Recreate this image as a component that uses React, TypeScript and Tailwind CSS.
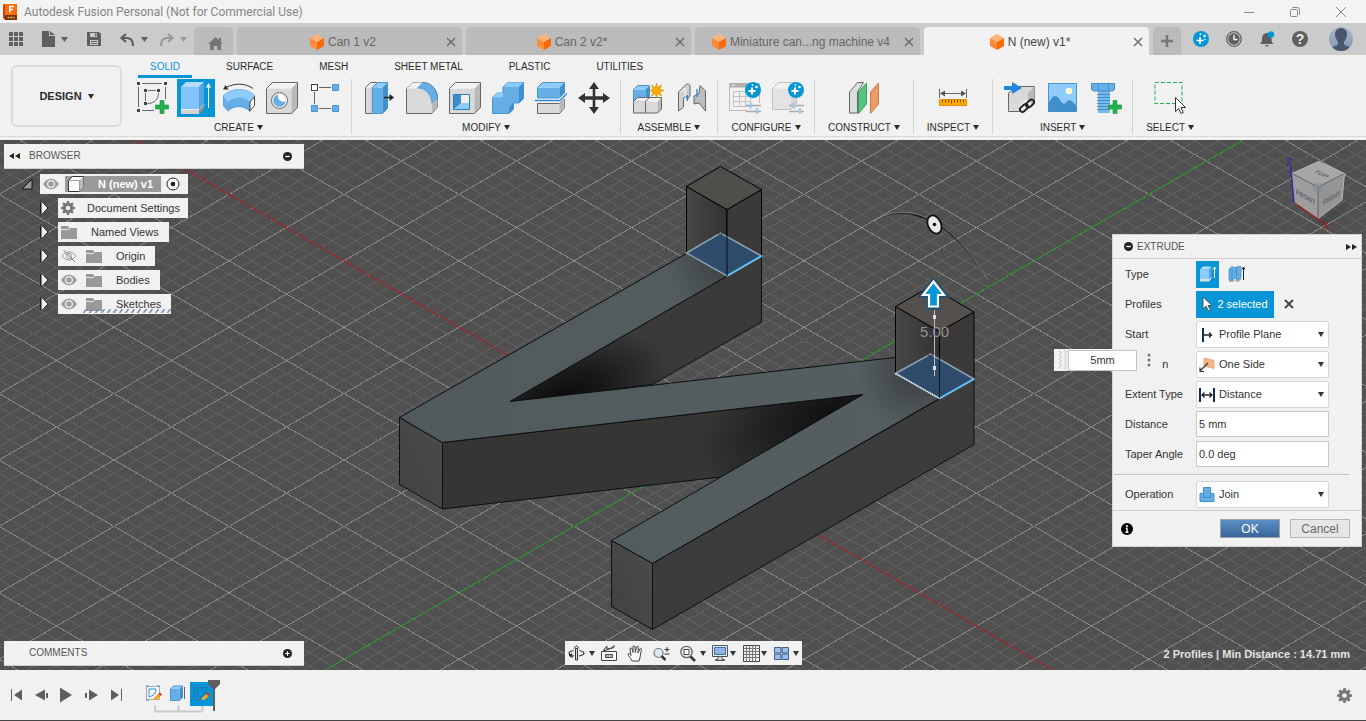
import type { ReactNode } from "react";
import clsx from "clsx";

const OUT = "#666";
const BLUE = "#66aee6";
const BLUE_LIGHT = "#8ecbff";
const BLUE_DARK = "#3f8fcb";

function Caret({ className = "" }: { className?: string }) {
  return (
    <svg width="6" height="5" viewBox="0 0 7 5" preserveAspectRatio="none" className={clsx("shrink-0", className)}>
      <path d="M0 0h7L3.5 5z" fill="currentColor" />
    </svg>
  );
}

function Icon32({ children }: { children: ReactNode }) {
  return (
    <svg width="32" height="32" viewBox="0 0 32 32" fill="none" className="shrink-0">
      {children}
    </svg>
  );
}

function PlusBadge() {
  return <path d="M23 18.5h4v4.5h4.5v4h-4.5v4.5h-4v-4.5h-4.5v-4h4.5z" fill="#22b14c" stroke="#159040" strokeWidth=".6" />;
}

// solid box drawn as front, top and right faces
function Box({ x, y, w, h, d, front, top, side, stroke }: {
  x: number; y: number; w: number; h: number; d: number;
  front: string; top: string; side: string; stroke?: string;
}) {
  return (
    <g>
      <path d={`M${x} ${y + d}h${w}v${h}h${-w}z`} fill={front} />
      <path d={`M${x} ${y + d}l${d} ${-d}h${w}l${-d} ${d}z`} fill={top} />
      <path d={`M${x + w} ${y + d}l${d} ${-d}v${h}l${-d} ${d}z`} fill={side} />
      {stroke && <path d={`M${x} ${y + d}l${d} ${-d}h${w}v${h}l${-d} ${d}h${-w}z`} stroke={stroke} fill="none" />}
    </g>
  );
}

const gray = { front: "#d9d9d9", top: "#f2f2f2", side: "#b9b9b9", stroke: OUT };
const blue = { front: BLUE, top: BLUE_LIGHT, side: BLUE_DARK, stroke: "#4a93cb" };

function ConfigBadge() {
  return (
    <g>
      <path d="M17 23.5h15M17 29.5h15" stroke="#ababab" strokeWidth="1.5" />
      <path d="M22 20.500v6M28 26v6" stroke="#9ecbee" strokeWidth="2.5" />
      <circle cx="24" cy="8" r="8" fill="#0696d7" />
      <path d="M23 5.500v7M19.500 9h7" stroke="#fff" strokeWidth="2" />
      <circle cx="27.500" cy="5" r="1.3" fill="#fff" />
      <circle cx="23.500" cy="2.800" r=".9" fill="#fff" />
    </g>
  );
}

const icons: Record<string, ReactNode> = {
  sketch: (
    <>
      <path d="M5 1.500h20M1.500 5v20M28.500 5v12M5 28.500h12" stroke={OUT} />
      <path d="M0 0h3v3H0zM27 0h3v3h-3zM0 27h3v3H0zM7 7h3v3H7zM20 7h3v3h-3zM7 20h3v3H7z" fill="#444" />
      <path d="M11 8.500h8M8.500 11v8M21.500 11c0 6-4 10.500-11 10.500" stroke={OUT} />
      <PlusBadge />
    </>
  ),
  extrude: (
    <>
      <path d="M1 27h18l5-5v4.500L19 32H1z" fill="#d4d4d4" />
      <path d="M19 27l5-5v4.500L19 32z" fill="#8b8b8b" />
      <path d="M1 27.500h18l5-5" stroke="#eee" />
      <path d="M1 5h18v22H1z" fill="#82c4fb" />
      <path d="M1 5l5-5h18l-5 5z" fill="#b5defd" />
      <path d="M19 5l5-5v22l-5 5z" fill="#57a5e0" />
      <path d="M28.500 26V4" stroke="#fff" />
      <path d="M26 5.500L28.500 1 31 5.500z" fill="#fff" />
    </>
  ),
  revolve: (
    <>
      <path d="M30 6.500C22 1 12 .8 3 5.500" stroke="#333" />
      <path d="M0 7.500L2.500 3l3 4.500z" fill="#333" />
      <path d="M0 14C8 6 23 5 32 14l-5 5.500v10C21 23 11 23 5 29l-5-6z" fill={BLUE} stroke="#3f8fcb" strokeWidth=".8" />
      <path d="M0 14C8 6 23 5 32 14l-5 6C21 14 11 14 5 20z" fill={BLUE_LIGHT} />
      <path d="M27 20l4.500-5.500v9L27 29z" fill="#fff" stroke="#444" />
    </>
  ),
  hole: (
    <>
      <Box x={0.5} y={0.5} w={25} h={25} d={6} {...gray} />
      <circle cx="13.500" cy="18.500" r="8" fill="#f4f4f4" stroke={OUT} />
      <circle cx="13.500" cy="18.500" r="6.300" fill={BLUE} />
      <path d="M12 12.400a6.300 6.300 0 0 1 7.700 7.400c-5.500.5-8.500-3-7.700-7.400z" fill="#fff" />
    </>
  ),
  pattern: (
    <>
      <path d="M10 5.500h12M5.500 10v12M10 26.500h12" stroke={OUT} />
      <rect x="2.500" y="2.500" width="6" height="6" fill="#fff" stroke="#444" />
      <path d="M23.500 2.500h6v6h-6zM2.500 23.500h6v6h-6zM23.500 23.500h6v6h-6z" fill={BLUE} stroke="#4a93cb" />
    </>
  ),
  presspull: (
    <>
      <Box x={2.5} y={0.5} w={6} h={26} d={5} {...gray} />
      <Box x={9.5} y={0.5} w={10} h={26} d={5} {...blue} />
      <path d="M21 15.500h7" stroke="#222" strokeWidth="1.5" />
      <path d="M26.500 12l4.500 3.500-4.500 3.500z" fill="#222" />
    </>
  ),
  fillet: (
    <>
      <path d="M.5 7L7 .5h10c8 0 14 7 14.500 14V25L26 31.500H.5z" fill="#d9d9d9" stroke={OUT} />
      <path d="M.5 7L7 .5h10L11.500 6z" fill="#f2f2f2" />
      <path d="M11.500 6L17 .5c8 0 14 7 14.500 16L26 21.500C25.500 12 19 6 11.500 6z" fill={BLUE} stroke="#4a93cb" strokeWidth=".7" />
      <path d="M26 22l5.500-5.500V25L26 31z" fill="#b9b9b9" />
    </>
  ),
  shell: (
    <>
      <Box x={0.5} y={0.5} w={25} h={25} d={6} {...gray} />
      <path d="M4.500 12.500h16v15h-16z" fill={BLUE_LIGHT} stroke="#2c7fbe" />
      <path d="M5 13h7v8l-7 6z" fill={BLUE_DARK} />
      <path d="M12 13h8v8h-8z" fill="#f1f1f1" />
    </>
  ),
  combine: (
    <>
      <path d="M.5 15.500L5 11h6V5L15.500.5h16v16L27 21h-5.500v6L17 31.500H.5z" fill={BLUE} stroke="#4a93cb" />
      <path d="M11 5L15.500.5h16L27 5zM.5 15.500L5 11h6v4.500z" fill={BLUE_LIGHT} />
      <path d="M27 5l4.500-4.500v16L27 21zM17 25l4.500-4v6L17 31.500z" fill={BLUE_DARK} />
    </>
  ),
  split: (
    <>
      <Box x={2.5} y={0.5} w={22} h={10.5} d={5} {...blue} />
      <path d="M2.500 21.500h22L29.500 17v9l-5 5.500h-22z" fill="#d9d9d9" stroke={OUT} />
      <path d="M24.500 21.500L29.500 17v9l-5 5z" fill="#b9b9b9" />
      <path d="M0 18.500h25l7-7" stroke="#fff" strokeWidth="3" />
      <path d="M0 18.500h25l7-7" stroke="#1e88e0" strokeWidth="1.3" />
    </>
  ),
  move: (
    <path d="M16 0l5 7h-3.700v7.200H25V11l7 5-7 5v-3.300h-7.700V25H21l-5 7-5-7h3.700v-7.300H7V21l-7-5 7-5v3.200h7.700V7H11z" fill="#333" />
  ),
  component: (
    <>
      <Box x={1.5} y={3.5} w={12} h={12} d={4} {...blue} />
      <Box x={1.5} y={15.5} w={12} h={11.5} d={4} {...gray} />
      <Box x={13.5} y={15.5} w={12} h={11.5} d={4} {...gray} />
      <path d="M24.500 1l1.200 4.700L29.500 3l-1.800 4.200L32 8.500l-4.300 1.300 1.800 4.200-3.800-2.500-1.200 4.500-1.200-4.500-3.800 2.500 1.800-4.200L17 8.500l4.300-1.300L19.500 3l3.800 2.700z" fill="#ffa800" stroke="#d98a00" strokeWidth=".6" />
    </>
  ),
  joint: (
    <>
      <path d="M3.500 10L10 3.500c1-2 5-2 5 .5v10L12 17.500V14L8.500 16v9l-5 4z" fill="#d0d0d0" stroke={OUT} />
      <path d="M5.500 10.500L10 6v9" stroke="#f7f7f7" />
      <path d="M30.500 9L25 3.500l-1 8L19 14v8l5-1 6.500 8z" fill="#bcbcbc" stroke={OUT} />
      <path d="M22 7v8M12.500 13v6" stroke="#1e88e0" strokeWidth="1.3" />
    </>
  ),
  configTable: (
    <>
      <path d="M1 1h29v4.500H1z" fill="#b0b0b0" />
      <path d="M.5 1v27.500H18M30.500 1v20" stroke="#bcbcbc" />
      <path d="M4.500 9.500h17v15h-17zM4.500 14.500h18M4.500 19.500h17M10.500 9.500v15M16.500 9.500v15" stroke="#c2c2c2" />
      <path d="M3 3h3" stroke="#fff" />
      <ConfigBadge />
    </>
  ),
  configBody: (
    <>
      <g opacity=".55">
        <Box x={0.5} y={0.5} w={18} h={21} d={6} front="#d9d9d9" top="#f2f2f2" side="#c5c5c5" stroke="#999" />
      </g>
      <ConfigBadge />
    </>
  ),
  plane: (
    <>
      <path d="M1.500 10l8-9.500h6l-6 9.500v21h-8z" fill="#dedede" stroke={OUT} />
      <path d="M10.500 10l8-9v21l-8 9.500z" fill="#57c47e" stroke="#3da162" />
      <path d="M22.500 10l8-9v21l-8 9.500z" fill="#e99a66" stroke="#cf7d45" />
    </>
  ),
  measure: (
    <>
      <path d="M2.500 7v9M29.500 7v9M5 11.500h22" stroke={OUT} />
      <path d="M3 11.500l5-3v6zM29 11.500l-5-3v6z" fill="#555" />
      <path d="M2.500 17.500h27v6h-27z" fill="#ffa800" stroke="#e28f00" />
      <path d="M5.500 18v2.500M8.500 18v2.500M11.500 18v2.500M14.500 18v3.500M17.500 18v2.500M20.500 18v2.500M23.500 18v2.500M26.500 18v2.500" stroke="#7a5200" />
    </>
  ),
  insert: (
    <>
      <path d="M4.500 11L13 4.500h17.500v16L24 29.500H4.500z" fill="#d9d9d9" stroke={OUT} />
      <path d="M24 11l6.500-6.500V22L24 29z" fill="#b9b9b9" />
      <path d="M0 4h8V0l10 6-10 6V8H0z" fill="#1e88e0" />
      <g stroke="#f4f4f4" strokeWidth="5">
        <rect x="17" y="22.500" width="9" height="5.500" rx="2.700" transform="rotate(-45 21 25)" />
      </g>
      <g stroke="#222" strokeWidth="1.9">
        <rect x="15.500" y="23.500" width="9" height="5" rx="2.500" transform="rotate(-42 20 26)" />
        <rect x="21.500" y="19" width="9" height="5" rx="2.500" transform="rotate(-42 26 21.500)" />
      </g>
    </>
  ),
  canvas: (
    <>
      <rect x="1.500" y="1.500" width="28" height="28" fill={BLUE_LIGHT} stroke="#4a93cb" />
      <path d="M1.500 21c5-9 8-9 12-2 2 3 4 4 6 1 3-4 6-1 10 4v5.500h-28z" fill={BLUE_DARK} />
      <circle cx="22" cy="9" r="3.300" fill="#fffcc8" />
    </>
  ),
  bolt: (
    <>
      <path d="M8 8h12v23H8z" fill="#7bb8e6" />
      <path d="M7 12.500h13M7 15.500h13M7 18.500h13M7 21.500h13M7 24.500h13M7 27.500h13" stroke="#3f8fcb" />
      <path d="M1.500 1.500h23v6l-2 1.500h-19l-2-1.500z" fill={BLUE} stroke="#3f8fcb" />
      <path d="M8 2v6M18.500 2v6" stroke="#3f8fcb" />
      <PlusBadge />
    </>
  ),
  select: (
    <>
      <rect x="1" y=".5" width="27" height="21" stroke="#22b14c" strokeDasharray="4 2" />
      <path d="M21.500 15.500v14l3.200-3 2.300 5 2.300-1-2.300-5h4.500z" fill="#fff" stroke="#333" />
    </>
  ),
};

const groups = [
  { label: "CREATE", icons: ["sketch", "extrude", "revolve", "hole", "pattern"] },
  { label: "MODIFY", icons: ["presspull", "fillet", "shell", "combine", "split", "move"] },
  { label: "ASSEMBLE", icons: ["component", "joint"] },
  { label: "CONFIGURE", icons: ["configTable", "configBody"] },
  { label: "CONSTRUCT", icons: ["plane"] },
  { label: "INSPECT", icons: ["measure"] },
  { label: "INSERT", icons: ["insert", "canvas", "bolt"] },
  { label: "SELECT", icons: ["select"] },
];

const ribbonTabs = ["SOLID", "SURFACE", "MESH", "SHEET METAL", "PLASTIC", "UTILITIES"];

const documents = [
  { name: "Can 1 v2", active: false },
  { name: "Can 2 v2*", active: false },
  { name: "Miniature can...ng machine v4", active: false },
  { name: "N (new) v1*", active: true },
];

function TitleBar() {
  return (
    <header className="h-[23px] bg-[#f3f3f3] flex items-center pl-[3px] text-[#858585]">
      <svg width="14" height="16" viewBox="0 0 14 16" className="shrink-0">
        <path d="M1 0h12l1 2v14H2L0 14V1z" fill="#c24a00" />
        <path d="M2 0h12v11H2z" fill="#ff6b0f" />
        <path d="M2 11h12v5H2z" fill="#7c3000" />
        <path d="M6.900 8.500v-6h4M7 5.500h3" stroke="#fff" strokeWidth="1.6" fill="none" />
        <path d="M4.500 13.500h7" stroke="#d9a98a" strokeWidth="1.5" strokeDasharray="2 .6" />
      </svg>
      <span className="ml-[7px] font-[Roboto,sans-serif] text-xs leading-4">
        Autodesk Fusion Personal (Not for Commercial Use)
      </span>
      <div className="ml-auto flex gap-[34px] pr-[19px]">
        <button aria-label="Minimize">
          <svg width="12" height="12" viewBox="0 0 12 12"><path d="M1 6.500h10" stroke="#888" /></svg>
        </button>
        <button aria-label="Restore">
          <svg width="12" height="12" viewBox="0 0 12 12" fill="none" stroke="#888">
            <rect x="1.500" y="3.500" width="7" height="7" rx="1" />
            <path d="M3.500 1.500h5a2 2 0 0 1 2 2v5" />
          </svg>
        </button>
        <button aria-label="Close">
          <svg width="12" height="12" viewBox="0 0 12 12"><path d="M1 1l10 10M11 1L1 11" stroke="#888" /></svg>
        </button>
      </div>
    </header>
  );
}

function DocCube() {
  return (
    <svg width="14" height="16" viewBox="0 0 14 16" className="shrink-0">
      <path d="M7 0l7 4-7 4-7-4z" fill="#ffb37a" />
      <path d="M0 4l7 4v8l-7-4z" fill="#ff8a3c" />
      <path d="M14 4L7 8v8l7-4z" fill="#f96a0b" />
    </svg>
  );
}

function TabBar() {
  return (
    <div className="h-8 bg-[#cbcbcb] flex items-end text-[#5f5f5f]">
      <div className="flex items-center w-[194px] h-8 pl-[9px] pb-1 shrink-0">
        <button aria-label="Data panel" className="mt-1">
          <svg width="14" height="14" viewBox="0 0 14 14" fill="currentColor">
            <path d="M0 0h4v4H0zM5 0h4v4H5zM10 0h4v4h-4zM0 5h4v4H0zM5 5h4v4H5zM10 5h4v4h-4zM0 10h4v4H0zM5 10h4v4H5zM10 10h4v4h-4z" />
          </svg>
        </button>
        <button aria-label="File" className="flex items-center gap-1.5 ml-[19px] mt-1">
          <svg width="13" height="16" viewBox="0 0 13 16" fill="currentColor"><path d="M0 0h7v5h6v11H0zM8 0l5 4H8z" /></svg>
          <Caret className="w-[7px]" />
        </button>
        <button aria-label="Save" className="ml-[19px] mt-1">
          <svg width="14" height="14" viewBox="0 0 14 14">
            <path d="M0 0h12l2 2v12H0z" fill="currentColor" />
            <path d="M3 1h7v4H3zM3 8h8v5H3z" fill="#cbcbcb" />
            <path d="M8 1.500h1.500v2.500H8zM4 9h6v1H4zM4 11h6v1H4z" fill="#5f5f5f" />
          </svg>
        </button>
        <button aria-label="Undo" className="flex items-center gap-[7px] ml-[19px] mt-1">
          <svg width="14" height="13" viewBox="0 0 14 13"><path d="M6 1L1.500 5 6 9M2 5h5c4 0 6 3 6 8" fill="none" stroke="currentColor" strokeWidth="2.2" /></svg>
          <Caret className="w-[7px]" />
        </button>
        <button aria-label="Redo" className="flex items-center gap-1.5 ml-3 mt-1 text-[#9a9a9a]">
          <svg width="14" height="13" viewBox="0 0 14 13"><path d="M8 1l4.500 4L8 9M12 5H7c-4 0-6 3-6 8" fill="none" stroke="currentColor" strokeWidth="2.2" /></svg>
          <Caret className="w-[7px]" />
        </button>
      </div>
      <nav className="flex-1 flex gap-1 min-w-0">
        <a href="#home" aria-label="Home" className="w-[39px] h-7 bg-[#bbb] rounded-t flex items-center justify-center pt-1 pl-1 shrink-0 text-[#757575]">
          <svg width="15" height="13" viewBox="0 0 15 13" fill="currentColor"><path d="M7.500 0L11 3V.8h2V5l2 2h-2v6H9.300V9H5.700v4H2V7H0z" /></svg>
        </a>
        {documents.map((doc) => (
          <div
            key={doc.name}
            className={clsx(
              "flex-1 min-w-0 h-7 rounded-t flex items-center pl-1 pr-[5px] pt-px",
              doc.active ? "bg-[#f2f2f2] text-[#444]" : "bg-[#bbb] text-[#666]"
            )}
          >
            <a href="#doc" className="flex-1 min-w-0 flex items-center justify-center gap-1 text-xs leading-4 whitespace-nowrap">
              <DocCube />
              {doc.name}
            </a>
            <button aria-label={`Close ${doc.name}`}>
              <svg width="12" height="12" viewBox="0 0 12 12"><path d="M2 2l8 8M10 2l-8 8" stroke="#6a6a6a" strokeWidth="1.4" /></svg>
            </button>
          </div>
        ))}
        <button aria-label="New document" className="w-7 h-7 bg-[#bbb] rounded-t flex items-center justify-center shrink-0">
          <svg width="14" height="14" viewBox="0 0 14 14"><path d="M7 1v12M1 7h12" stroke="#777" strokeWidth="2.5" /></svg>
        </button>
      </nav>
      <div className="h-8 flex items-center gap-[17px] pl-3 pr-[13px] shrink-0">
        <button aria-label="Extensions">
          <svg width="16" height="16" viewBox="0 0 16 16">
            <circle cx="8" cy="8" r="8" fill="#0696d7" />
            <path d="M7 6v7M3.500 9.500h7" stroke="#fff" strokeWidth="1.7" />
            <circle cx="11.500" cy="5" r="1.300" fill="#fff" />
            <circle cx="7.500" cy="3.200" r="1" fill="#fff" />
            <circle cx="12" cy="8.500" r=".8" fill="#fff" />
          </svg>
        </button>
        <button aria-label="Job status">
          <svg width="16" height="16" viewBox="0 0 16 16" fill="none">
            <circle cx="8" cy="8" r="7.300" stroke="#5f5f5f" strokeWidth="1.3" />
            <circle cx="8" cy="8" r="5.700" fill="#5f5f5f" />
            <path d="M8 4v4.500h3.500" stroke="#fff" strokeWidth="1.3" />
          </svg>
        </button>
        <button aria-label="Notifications">
          <svg width="16" height="16" viewBox="0 0 16 16">
            <path d="M1 13c2-2 2-3 2-6 0-2.500 1.500-4.500 4.500-5C11 1.700 12.500 4 12.500 7c0 3 0 4 2 6zM6 14h4l-2 2z" fill="#5f5f5f" />
            <circle cx="12" cy="3.500" r="3.200" fill="#0696d7" />
          </svg>
        </button>
        <button aria-label="Help" className="w-4 h-4 rounded-full bg-[#5f5f5f] text-[#eee] text-sm leading-4 font-bold">?</button>
        <button aria-label="Account" className="ml-1">
          <svg width="24" height="24" viewBox="0 0 24 24">
            <defs>
              <linearGradient id="avatar" x1="0" y1="0" x2="0" y2="1">
                <stop offset="0" stopColor="#a9b8cc" />
                <stop offset="1" stopColor="#7f93b3" />
              </linearGradient>
              <clipPath id="avatarClip"><circle cx="12" cy="12" r="12" /></clipPath>
            </defs>
            <g clipPath="url(#avatarClip)">
              <path d="M0 0h24v24H0z" fill="url(#avatar)" />
              <path d="M12 1c4 0 6 3 6 6.500S16 13 15 15v2.500c2 1.500 5 1.500 6 4V24H3v-2.500c1-2.500 4-2.500 6-4V15C8 13 6 11 6 7.500S8 1 12 1z" fill="#47566c" />
            </g>
          </svg>
        </button>
      </div>
    </div>
  );
}

function Ribbon() {
  return (
    <section className="bg-[#f1f1f1] h-[85px] pb-[3px] flex text-[#2b2b2b] text-[10px] leading-3">
      <div className="flex flex-1 border-b border-[#d9d9d9]">
        <button className="ml-[11px] mt-2.5 w-[111px] h-[62px] shrink-0 border-2 border-[#dcdcdc] rounded-md text-[11px] font-bold flex items-center justify-center gap-1.5">
          DESIGN <Caret />
        </button>
        <div className="ml-[9px] flex-1">
          <nav className="flex gap-[22px] pl-[7px] h-6">
            {ribbonTabs.map((tab) => (
              <a
                key={tab}
                href="#tab"
                className={clsx(
                  "h-[23px] px-3 pt-1.5 border-b-[3px] whitespace-nowrap",
                  tab === "SOLID" ? "text-[#0696d7] border-[#0696d7]" : "border-transparent"
                )}
              >
                {tab}
              </a>
            ))}
          </nav>
          <div className="flex">
            {groups.map((group, i) => (
              <div
                key={group.label}
                className={clsx(
                  "flex flex-col items-center h-[55px]",
                  i === 0 ? "pr-[5px]" : "px-[5px]",
                  i < groups.length - 1 && "border-r border-[#d2d2d2]"
                )}
              >
                <div className="flex">
                  {group.icons.map((name) => (
                    <button key={name} aria-label={name} className="w-[43px] h-[38px] flex justify-center">
                      <span className={clsx("w-[38px] h-[38px] flex items-center justify-center", name === "extrude" && "bg-[#0696d7]")}>
                        <Icon32>{icons[name]}</Icon32>
                      </span>
                    </button>
                  ))}
                </div>
                <button className="flex items-center gap-[3px] px-2 mt-[5px] whitespace-nowrap">
                  {group.label} <Caret className="-mt-px" />
                </button>
              </div>
            ))}
          </div>
        </div>
      </div>
    </section>
  );
}

// isometric ground grid, both line families through the origin
const ORIGIN = { x: 689, y: 320 };
const SLOPE = 0.5774;

function gridPath(step: number, skip: number) {
  let d = "";
  const count = Math.ceil(1400 / step);
  for (let n = -count; n <= count; n++) {
    if (skip && n % skip === 0) continue;
    const y = ORIGIN.y + n * step;
    const rise = 1200 * SLOPE;
    d += `M${ORIGIN.x - 1200} ${(y - rise).toFixed(1)}L${ORIGIN.x + 1200} ${(y + rise).toFixed(1)}`;
    d += `M${ORIGIN.x - 1200} ${(y + rise).toFixed(1)}L${ORIGIN.x + 1200} ${(y - rise).toFixed(1)}`;
  }
  return d;
}

const MINOR = gridPath(13.28, 5);
const MAJOR = gridPath(66.4, 0);

function Scene() {
  return (
    <svg className="absolute inset-0 w-full h-full" viewBox="0 0 1366 530" preserveAspectRatio="xMidYMid slice" fill="none">
      <defs>
        <linearGradient id="top" x1="400" y1="300" x2="980" y2="240" gradientUnits="userSpaceOnUse">
          <stop offset="0" stopColor="#50595b" />
          <stop offset="1" stopColor="#566062" />
        </linearGradient>
        <radialGradient id="notchA" cx="565" cy="255" r="110" gradientUnits="userSpaceOnUse" gradientTransform="translate(565 255) rotate(-20) scale(1 .5) translate(-565 -255)">
          <stop offset="0" stopColor="#0c0c0c" />
          <stop offset=".35" stopColor="#181818" />
          <stop offset="1" stopColor="#3b3a39" />
        </radialGradient>
        <radialGradient id="notchB" cx="830" cy="272" r="140" gradientUnits="userSpaceOnUse" gradientTransform="translate(830 272) rotate(-22) scale(1 .5) translate(-830 -272)">
          <stop offset="0" stopColor="#101010" />
          <stop offset=".35" stopColor="#1c1c1c" />
          <stop offset="1" stopColor="#353533" />
        </radialGradient>
        <linearGradient id="pillar" x1="0" y1="0" x2="1" y2="0">
          <stop offset="0" stopColor="#484847" />
          <stop offset="1" stopColor="#333232" />
        </linearGradient>
        <linearGradient id="end" x1="0" y1="1" x2="1" y2="0">
          <stop offset="0" stopColor="#414141" />
          <stop offset="1" stopColor="#4b4b4b" />
        </linearGradient>
        <radialGradient id="shade" cx="725" cy="120" r="60" gradientUnits="userSpaceOnUse">
          <stop offset="0" stopColor="#222" stopOpacity=".5" />
          <stop offset="1" stopColor="#222" stopOpacity="0" />
        </radialGradient>
        <radialGradient id="shade2" cx="915" cy="235" r="60" gradientUnits="userSpaceOnUse">
          <stop offset="0" stopColor="#222" stopOpacity=".5" />
          <stop offset="1" stopColor="#222" stopOpacity="0" />
        </radialGradient>
        <linearGradient id="arc" x1="875" y1="0" x2="988" y2="0" gradientUnits="userSpaceOnUse">
          <stop offset="0" stopColor="#111" stopOpacity="0" />
          <stop offset=".4" stopColor="#111" />
          <stop offset=".7" stopColor="#222" />
          <stop offset="1" stopColor="#222" stopOpacity="0" />
        </linearGradient>
      </defs>
      <rect x="-600" width="2600" height="530" fill="#505050" />
      <g shapeRendering="crispEdges">
        <path d={MINOR} stroke="#606060" />
        <path d={MAJOR} stroke="#858585" />
        <path d="M-511 -373L1889 1013" stroke="#a82222" />
        <path d="M-511 1013L1889 -373" stroke="#2a982a" />
      </g>

      <g stroke="#0b0f11" strokeLinejoin="round">
        {/* back arm, inner wall and post side */}
        <path d="M510 261.500L727 136l34.500-20v66L652 244.500z" fill="url(#notchA)" />
        {/* front wall of the diagonal */}
        <path d="M442.500 302.500L863 254.500 721 337 442.500 369z" fill="url(#notchB)" />
        <path d="M399.500 277.500l43 25V369l-43-24.500z" fill="url(#end)" />
        <path
          d="M686.500 113.500L399.500 277.500l43 25L863 254.500 611.500 400.500l41 23L939.500 258.500 974 239 930 214 895 217.500 510 261.500 727 136z"
          fill="url(#top)"
        />
        <path d="M652.500 423.500L974 239v65.500L652.500 489.500z" fill="#3c3c3c" />
        <path d="M611.500 400.500l41 23v66l-41-23z" fill="url(#end)" />
      </g>
      <path d="M686.500 113.500L600 163l30 28 97-55z" fill="url(#shade)" />
      <path d="M895 217.500L840 224l20 80 79.500-46L974 239l-44-25z" fill="url(#shade2)" />

      <g stroke="#000">
        <path d="M686.500 46.500l40.500 23V136l-40.500-23z" fill="url(#pillar)" />
        <path d="M727 69.500l34.500-20V116L727 136z" fill="#3b3a39" />
        <path d="M686.500 46.500l34-20 41 23-34.500 20z" fill="#504e4a" />
        <path d="M895.500 166.500l44 25v67l-44-25z" fill="url(#pillar)" />
        <path d="M939.500 191.500L974 172v67l-34.500 19.500z" fill="#3b3a39" />
        <path d="M895.500 166.500l35-20L974 172l-34.500 19.500z" fill="#53504d" />
      </g>
      <g strokeWidth="1.5">
        <path d="M686.500 113l34-20 41 23L727 136z" fill="#2f4d70" fillOpacity=".92" stroke="#8fa3b5" />
        <path d="M727 136l34.500-20" stroke="#5cc0f8" strokeWidth="2" />
        <path d="M895.500 233.500l35-19.500L974 239l-34.500 19.500z" fill="#2f4d70" fillOpacity=".92" stroke="#8fa3b5" />
        <path d="M939.500 258.500L974 239" stroke="#5cc0f8" strokeWidth="2" />
        <path d="M895.500 233.500l44 25" stroke="#fff" strokeDasharray="1 1" />
      </g>
      <path d="M727 93v43M939.500 214v44" stroke="#071320" />
      <circle cx="720.500" cy="91.500" r="3" stroke="#3c3c3c" />
      <circle cx="930" cy="213" r="3" stroke="#3c3c3c" />

      {/* taper handle */}
      <path d="M875 82c14-11 34-11 52-3 22 9 43 32 61 62" stroke="#9b9b9b" transform="translate(0 -1)" opacity=".6" />
      <path d="M875 82c14-11 34-11 52-3 22 9 43 32 61 62" stroke="url(#arc)" strokeWidth="1.3" />
      <ellipse cx="934.500" cy="84.500" rx="6.500" ry="9.500" transform="rotate(-25 934.500 84.500)" fill="#e8e8e8" stroke="#111" strokeWidth="1.8" />
      <circle cx="934.500" cy="84.500" r="1.800" fill="#111" />

      {/* distance manipulator */}
      <path d="M934.500 170v66" stroke="#b9bcc0" />
      <path d="M933 175h3v4h-3zM933 226h3v4h-3z" fill="#d6dde4" />
      <text x="934.500" y="197" textAnchor="middle" fontSize="15" fill="#929292">5.00</text>
      <path d="M933.500 140.500l12 15h-7v12h-10v-12h-7z" fill="#0696d7" stroke="#1c4f73" strokeWidth="4" />
      <path d="M933.500 141.500l10.500 13.500h-6v11.500h-9V155h-6z" fill="#0696d7" stroke="#fff" strokeWidth="2.2" />
    </svg>
  );
}

function Eye({ off = false }: { off?: boolean }) {
  return (
    <svg width="16" height="12" viewBox="0 0 16 12" fill="none" className="shrink-0">
      {off ? (
        <>
          <path d="M1 6c4-5.500 10-5.500 14 0-4 5.500-10 5.500-14 0z" stroke="#999" />
          <circle cx="8" cy="6" r="2.500" stroke="#999" />
          <path d="M2.500 0l11.500 12" stroke="#777" />
        </>
      ) : (
        <>
          <path d="M0 6c4.500-7 11.500-7 16 0-4.500 7-11.500 7-16 0z" fill="#9b9b9b" />
          <circle cx="8" cy="6" r="3.300" stroke="#f1f1f1" strokeWidth="1.3" />
        </>
      )}
    </svg>
  );
}

function Folder() {
  return (
    <svg width="16" height="13" viewBox="0 0 16 13" className="shrink-0">
      <path d="M0 0h7l1.500 2H16v11H0z" fill="#999" />
      <path d="M0 3.500h7.500L9 2" stroke="#e9e9e9" fill="none" />
    </svg>
  );
}

function Gear({ size, className = "" }: { size: number; className?: string }) {
  return (
    <svg width={size} height={size} viewBox="0 0 16 16" className={className}>
      <path
        fillRule="evenodd"
        fill="currentColor"
        d="M6.800 0h2.400l.4 2.300 1.200.5L12.800 1.500l1.700 1.700-1.300 2 .5 1.200 2.300.4v2.400l-2.300.4-.5 1.200 1.300 2-1.700 1.700-2-1.300-1.200.5-.4 2.300H6.800l-.4-2.300-1.200-.5-2 1.300-1.700-1.700 1.300-2-.5-1.200L0 9.200V6.800l2.300-.4.5-1.200-1.300-2 1.700-1.700 2 1.300 1.200-.5zM8 5.500a2.500 2.500 0 1 0 0 5 2.500 2.500 0 0 0 0-5z"
      />
    </svg>
  );
}

function Disclosure() {
  return (
    <svg width="10" height="14" viewBox="0 0 10 14" className="shrink-0">
      <path d="M1.500 1h2l5.500 6-5.500 6h-2z" fill="#f1f1f1" stroke="#222" />
      <path d="M2.500 1.500v11" stroke="#777" />
    </svg>
  );
}

const treeItems = [
  { label: "Named Views", eye: null },
  { label: "Origin", eye: "off" },
  { label: "Bodies", eye: "on" },
  { label: "Sketches", eye: "on" },
];

function Browser() {
  return (
    <aside className="text-[11px] leading-4 text-[#333]">
      <div className="w-[300px] h-[25px] bg-[#f1f1f1] border-b border-[#cfcfcf] flex items-center pl-[5px] pr-3 text-[10px] text-[#555]">
        <button aria-label="Collapse browser">
          <svg width="11" height="6" viewBox="0 0 11 6"><path d="M5 0v6L0 3zM11 0v6L6 3z" fill="#222" /></svg>
        </button>
        <span className="ml-[9px]">BROWSER</span>
        <button aria-label="Browser options" className="ml-auto">
          <svg width="9" height="9" viewBox="0 0 10 10"><circle cx="5" cy="5" r="5" fill="#222" /><path d="M2.500 5h5" stroke="#fff" strokeWidth="1.5" /></svg>
        </button>
      </div>
      <ul className="flex flex-col gap-1 mt-[5px]">
        <li className="flex items-center pl-[17px]">
          <svg width="12" height="12" viewBox="0 0 12 12" className="mr-[7px]"><path d="M11 1v10H1z" fill="#999" stroke="#111" /></svg>
          <div className="flex items-center h-5 bg-[#f1f1f1] pl-[3px] pr-2">
            <Eye />
            <button className="ml-1.5 h-4 pl-[3px] pr-2 bg-[#999] text-white font-bold flex items-center gap-3.5">
              <svg width="16" height="16" viewBox="0 0 16 16">
                <path d="M.5 4.500l4-4h11v11l-4 4H.5z" fill="#fff" stroke="#333" />
                <path d="M11.500 4.500l4-4v11l-4 4z" fill="#bbb" />
                <path d="M.5 4.500h11v11" stroke="#999" fill="none" />
              </svg>
              N (new) v1
            </button>
            <svg width="14" height="14" viewBox="0 0 14 14" className="ml-[5px]"><circle cx="7" cy="7" r="6" fill="#fff" stroke="#222" /><circle cx="7" cy="7" r="2.300" fill="#222" /></svg>
          </div>
        </li>
        <li className="flex items-center pl-[35px] gap-[9px]">
          <Disclosure />
          <div className="flex items-center h-5 bg-[#f1f1f1] pl-[3px] pr-2 gap-3">
            <Gear size={14} className="text-[#777]" />
            Document Settings
          </div>
        </li>
        {treeItems.map((item) => (
          <li key={item.label} className="flex items-center pl-[35px] gap-[9px]">
            <Disclosure />
            <div className="relative flex items-center h-5 bg-[#f1f1f1] pl-[3px] pr-2.5">
              {item.eye && <span className="mr-[9px]"><Eye off={item.eye === "off"} /></span>}
              <Folder />
              <span className="ml-3.5">{item.label}</span>
              {item.label === "Sketches" && (
                <svg width="88" height="4" viewBox="0 0 88 4" className="absolute left-[25px] bottom-px">
                  <path
                    d={Array.from({ length: 15 }, (_, i) => `M${i * 6 + 0.5} 4l3-4`).join("")}
                    stroke="#7488ad"
                    strokeWidth="1.5"
                  />
                </svg>
              )}
            </div>
          </li>
        ))}
      </ul>
    </aside>
  );
}

function ViewCube() {
  return (
    <svg width="76" height="80" viewBox="1286 154 76 80" className="mt-2.5 shrink-0" fill="none">
      <path d="M1294 203l24 18 26-18 8-8-10 20-20 12z" fill="#333" opacity=".25" />
      <path d="M1318.500 161.500l26 12-26.500 13.500-26-13.500z" fill="#a6a7a7" />
      <path d="M1292 173.500l26 13.500v31.500l-24-15.500z" fill="#9c9d9c" />
      <path d="M1344.500 173.500L1318 187v31.500l24-18.500z" fill="#949594" />
      <path d="M1292 173.500l26 13.500 26.500-13.500M1318 187v31.500" stroke="#666" />
      <path d="M1292 173.500l26.500-12 26 12-2.500 26.500-24 18.500" stroke="#b8b8b8" />
      <path d="M1318 182l5 2.500v6l-5 2.500-5-2.500v-6z" fill="#7f8d96" opacity=".5" />
      <path d="M1290.500 167l3.500 36" stroke="#2a2aa8" strokeWidth="1.5" />
      <path d="M1294.500 203l29 20" stroke="#a02020" strokeWidth="1.5" />
      <g fontWeight="bold" fill="#5c6267">
        <text transform="matrix(.9 .42 -.8 .4 1313 172)" fontSize="7">TOP</text>
        <text transform="matrix(.8 .45 0 1 1296 194)" fontSize="7">FRONT</text>
        <text transform="matrix(.8 -.45 0 1 1323 205)" fontSize="7">RIGHT</text>
      </g>
      <text x="1286" y="166" fontSize="10" fill="#2a2aa8">Z</text>
      <text x="1323" y="229" fontSize="10" fill="#a02020">X</text>
    </svg>
  );
}

function Field({ label, id, children }: { label: string; id: string; children: ReactNode }) {
  return (
    <div className="relative flex items-center h-[30px]">
      <label htmlFor={id} className="w-[71px] shrink-0">{label}</label>
      {children}
    </div>
  );
}

function SelectField({ label, id, value, icon }: { label: string; id: string; value: string; icon: ReactNode }) {
  return (
    <Field label={label} id={id}>
      <div className="relative w-[133px]">
        <select id={id} className="appearance-none w-full h-[27px] bg-white border border-[#d6d6d6] rounded-xs pl-[22px] pr-4 leading-4">
          <option>{value}</option>
        </select>
        <svg width="16" height="16" viewBox="0 0 16 16" fill="none" className="absolute left-[3px] top-1.5 pointer-events-none">{icon}</svg>
        <Caret className="absolute right-[5px] top-[11px] pointer-events-none" />
      </div>
    </Field>
  );
}

function ExtrudePanel() {
  return (
    <form className="w-[250px] bg-[#f1f1f1] border border-[#d4d4d4] text-[11px] leading-4 text-[#333]">
      <div className="h-6 flex items-center pl-[11px] pr-1 text-[10px] text-[#555] border-b border-[#cfcfcf]">
        <svg width="9" height="9" viewBox="0 0 10 10"><circle cx="5" cy="5" r="5" fill="#222" /><path d="M2.500 5h5" stroke="#fff" strokeWidth="1.5" /></svg>
        <span className="ml-1">EXTRUDE</span>
        <button type="button" aria-label="Dock panel" className="ml-auto">
          <svg width="11" height="6" viewBox="0 0 11 6"><path d="M0 0v6l5-3zM6 0v6l5-3z" fill="#222" /></svg>
        </button>
      </div>
      <div className="pl-3">
        <Field label="Type" id="type">
          <button type="button" id="type" aria-label="Solid" className="w-[23px] h-[27px] bg-[#0696d7] flex items-center justify-center">
            <svg width="18" height="18" viewBox="0 0 18 18" fill="none">
              <path d="M1 14h9l2.500-2.500v2L10 16.500H1z" fill="#ddd" />
              <path d="M1 4.500h9V14H1z" fill="#8ecbff" />
              <path d="M1 4.500L4 1.500h8.500L10 4.500z" fill="#b5defd" />
              <path d="M10 4.500l2.500-3v10L10 14z" fill="#57a5e0" />
              <path d="M15.500 13V3M14 4.500L15.500 2 17 4.500" stroke="#fff" />
            </svg>
          </button>
          <button type="button" aria-label="Thin" className="w-[23px] h-[27px] ml-1.5 flex items-center justify-center">
            <svg width="18" height="18" viewBox="0 0 18 18" fill="none">
              <path d="M1 15l3-1 3 2 3-2 3-1v2l-3 2-3-1-3 1H1z" fill="#aaa" />
              <path d="M1 4l3-2.500 3 1 3-1h3v11l-3 2.500-3-1.500-3 1.500H1z" fill={BLUE} stroke={BLUE_DARK} strokeWidth=".7" />
              <path d="M4 4v10M8.500 3v10" stroke={BLUE_DARK} />
              <path d="M15.500 15V3M14 4.500L15.500 2 17 4.500" stroke="#222" />
            </svg>
          </button>
        </Field>
        <Field label="Profiles" id="profiles">
          <button type="button" id="profiles" className="h-[27px] w-[78px] bg-[#0696d7] text-white flex items-center justify-center gap-1 whitespace-nowrap">
            <svg width="11" height="16" viewBox="0 0 11 16"><path d="M1 1v12l3-3 2.500 5 2-1L6 9.500h4z" fill="#fff" stroke="#555" /></svg>
            2 selected
          </button>
          <button type="button" aria-label="Clear profiles" className="ml-2.5">
            <svg width="10" height="10" viewBox="0 0 10 10"><path d="M1 1l8 8M9 1L1 9" stroke="#444" strokeWidth="1.9" /></svg>
          </button>
        </Field>
        <SelectField label="Start" id="start" value="Profile Plane" icon={
          <>
            <path d="M4 1v14" stroke="#0f2b5b" strokeWidth="2" />
            <path d="M5 8h8M10 5.500L12.500 8 10 10.500" stroke="#222" strokeWidth="1.3" />
          </>
        } />
        <div className="relative">
          <SelectField label="Direction" id="direction" value="One Side" icon={
            <>
              <path d="M5 1l10 2.500v8L5 9z" fill="#f7b58c" stroke="#e08a55" strokeWidth=".6" />
              <path d="M9 6L1 14M1 10.500V14.500h4" stroke="#333" strokeWidth="1.2" />
            </>
          } />
          {/* floating distance box */}
          <div className="absolute -left-[71px] top-0 w-[108px] h-[22px] bg-[#f1f1f1] flex items-center">
            <svg width="14" height="22" viewBox="0 0 14 22" className="shrink-0">
              <path d="M5 2l3 2-3 2 3 2-3 2 3 2-3 2 3 2-3 2 3 2" stroke="#ccc" fill="none" />
              <path d="M11.500 1v20" stroke="#ddd" strokeWidth="2" />
            </svg>
            <input aria-label="Distance value" defaultValue="5mm" className="w-[69px] h-[21px] bg-white border border-[#c4c4c4] text-center shrink-0" />
            <button type="button" aria-label="More options" className="ml-2.5">
              <svg width="4" height="14" viewBox="0 0 4 14" fill="#777"><circle cx="2" cy="2" r="1.500" /><circle cx="2" cy="7" r="1.500" /><circle cx="2" cy="12" r="1.500" /></svg>
            </button>
          </div>
        </div>
        <SelectField label="Extent Type" id="extent" value="Distance" icon={
          <>
            <path d="M1 1v14M15 1v14" stroke="#0f2b5b" strokeWidth="2" />
            <path d="M3 8h10M5.500 5.500L3 8l2.500 2.500M10.500 5.500L13 8l-2.500 2.500" stroke="#222" strokeWidth="1.3" />
          </>
        } />
        <Field label="Distance" id="distance">
          <input id="distance" defaultValue="5 mm" className="w-[133px] h-[26px] bg-white border border-[#c9c9c9] px-0.5" />
        </Field>
        <Field label="Taper Angle" id="taper">
          <input id="taper" defaultValue="0.0 deg" className="w-[133px] h-[26px] bg-white border border-[#c9c9c9] px-0.5" />
        </Field>
      </div>
      <hr className="mt-[5px] mb-1 ml-px mr-3 border-[#c4c4c4]" />
      <div className="pl-3">
        <SelectField label="Operation" id="operation" value="Join" icon={
          <>
            <path d="M4.500.5h7v6h3.500v8H1v-8h3.500z" fill={BLUE} stroke="#3f8fcb" />
            <path d="M4.500 6.500v4h7v-4" stroke="#3f8fcb" />
          </>
        } />
      </div>
      <div className="mt-px border-t border-[#cfcfcf] h-9 flex items-center justify-end gap-2.5 pr-[11px] pl-2 text-xs">
        <svg width="12" height="12" viewBox="0 0 12 12" className="mr-auto"><circle cx="6" cy="6" r="6" fill="#000" /><path d="M6 5v4M4.500 9.300h3M4.800 5.300H6.500" stroke="#fff" strokeWidth="1.4" /><circle cx="6" cy="3" r="1" fill="#fff" /></svg>
        <button type="button" className="w-[60px] h-[19px] bg-linear-to-b from-[#5b8fc6] to-[#3a6699] border border-[#9aa5b0] text-white leading-4">OK</button>
        <button type="button" className="w-[60px] h-[19px] bg-[#e6e6e6] border border-[#b5b5b5] text-[#666] leading-4">Cancel</button>
      </div>
    </form>
  );
}

function NavBar() {
  return (
    <div className="self-start h-6 bg-[#f1f1f1] flex items-center px-[3px] text-[#333]">
      <button aria-label="Orbit" className="flex items-center gap-[3px]">
        <svg width="18" height="18" viewBox="0 0 18 18" fill="none" stroke="#333"><path d="M7.500 16V4.500h2V16z" fill="#ddd" /><path d="M6 4.500L8.500 1.500 11 4.500" /><path d="M5.500 6.500C-1 8 0 11.500 6 12M11.500 6.500C18 8 17 11 11 12" strokeWidth="1.2" /><path d="M4 9.500L1 11.500l3.500 2" fill="#333" /></svg>
        <Caret />
      </button>
      <button aria-label="Look at" className="ml-1.5">
        <svg width="16" height="16" viewBox="0 0 16 16" fill="none" stroke="#444"><path d="M.5 6.500h15v9H.5z" fill="#f8f8f8" /><path d="M4.500 9.500h7v3h-7z" fill="#bbb" /><path d="M2 6l11-3.500V.5L10.500 3 6 4V1L2.500 5" fill="#ccc" /></svg>
      </button>
      <button aria-label="Pan" className="ml-2.5">
        <svg width="17" height="17" viewBox="0 0 17 17"><path d="M5 16C4 13 1 11 1 9c1-1 2 0 3 1.500L3 4c0-1.500 1.800-1.500 2 0l1 3.500V2c0-1.500 2-1.500 2 0l.3 5.500L9.500 2c.4-1.300 2-.9 1.800.5L11 8l1.800-4c.5-1.200 2-.7 1.600.6C13.500 8 13.500 12 12 16z" fill="#fff" stroke="#444" /></svg>
      </button>
      <button aria-label="Zoom" className="ml-[9px]">
        <svg width="18" height="17" viewBox="0 0 18 17" fill="none"><circle cx="5.500" cy="8" r="4.500" fill="#d7eaf5" stroke="#777" strokeWidth="1.2" /><path d="M8.500 11l4 4" stroke="#333" strokeWidth="2.5" /><path d="M11.500 4.500h5M14 2v5M11.500 9h5" stroke="#333" /></svg>
      </button>
      <button aria-label="Fit" className="ml-[9px] flex items-center gap-[3px]">
        <svg width="17" height="17" viewBox="0 0 17 17" fill="none"><circle cx="6.500" cy="7" r="5.700" fill="#e3eef4" stroke="#666" strokeWidth="1.3" /><path d="M4 4.500h5v5H4z" fill="#fff" stroke="#444" /><path d="M10.500 11.500l4.500 4.500" stroke="#333" strokeWidth="2.5" /></svg>
        <Caret />
      </button>
      <button aria-label="Display settings" className="ml-1.5 flex items-center gap-0.5">
        <svg width="16" height="16" viewBox="0 0 16 16" fill="none" stroke="#555"><path d="M.5.5h15v11H.5z" fill="#eee" /><path d="M2.500 2.500h11v7h-11z" fill="#8fb8e6" stroke="#3a6ea8" /><path d="M6 12v2.500H3.500v1h9v-1H10V12" fill="#ddd" /></svg>
        <Caret />
      </button>
      <button aria-label="Grid and snaps" className="ml-[7px] flex items-center gap-px">
        <svg width="17" height="17" viewBox="0 0 17 17" fill="none" stroke="#777"><path d="M.5.5h16v16H.5z" stroke="#444" /><path d="M3.500.5v16M6.500.5v16M9.500.5v16M12.500.5v16M.5 3.500h16M.5 6.500h16M.5 9.500h16M.5 12.500h16" /></svg>
        <Caret />
      </button>
      <button aria-label="Viewports" className="ml-[7px] flex items-center gap-1">
        <svg width="15" height="13" viewBox="0 0 15 13" fill="#9cc0e8" stroke="#3f5f86"><path d="M.5.5h6.500v5.500H.5zM8 .5h6.500v5.500H8zM.5 7H7v5.500H.5zM8 7h6.500v5.500H8z" /></svg>
        <Caret />
      </button>
    </div>
  );
}

const playback = [
  { label: "First", d: "M1 1h1v12H1zM12 1.500v11L4 7z" },
  { label: "Step back", d: "M10 1.500v11L0 7zM11 5h2v5h-2z" },
  { label: "Play", d: "M0 -0.5v15L12 7z" },
  { label: "Step forward", d: "M4 1.500v11l9-5.500zM0 5h2v5H0z" },
  { label: "Last", d: "M1 1.500v11l8-5.500zM11 1h1v12h-1z" },
];

function Timeline() {
  return (
    <footer className="h-[51px] bg-[#f1f1f1] border-b border-[#444] flex items-center pl-2.5 pr-3.5 text-[#5f5f5f]">
      <div className="flex gap-[11px]">
        {playback.map((p) => (
          <button key={p.label} aria-label={p.label}>
            <svg width="14" height="14" viewBox="0 0 14 14" overflow="visible" fill="currentColor"><path d={p.d} /></svg>
          </button>
        ))}
      </div>
      <svg width="78" height="34" viewBox="0 0 78 34" className="ml-5 mt-0.5" fill="none">
        <path d="M11 26.500v6h47M34.500 26.500v5M58.500 26.500v6" stroke="#c9c9c9" strokeWidth="2" />
        <path d="M2.500 7.500h13v13h-13z" stroke="#aaa" fill="#f7f7f7" />
        <path d="M2 7h3M2 21h3M13 7h3M5 10h7M5 10v8M12 10c0 4-3 7-7 8" stroke="#2f93dc" />
        <path d="M10 19l4-4 3 2-4.500 4H9.500z" fill="#f5a623" />
        <path d="M14 15l2-1.500 2 2L17 17z" fill="#d33" />
        <Box x={26.5} y={7} w={9} h={11.5} d={3} {...blue} />
        <path d="M40.500 20V8" stroke="#666" />
        <path d="M46 3h23v24H46z" fill="#0696d7" />
        <path d="M50.500 8.500h12v12h-12z" stroke="#2277a5" />
        <circle cx="56.500" cy="14" r="4" stroke="#2277a5" />
        <path d="M58 19l4-4 3 2-4.500 4h-3z" fill="#f5a623" />
        <path d="M62 15l2-1.500 2 2L65 17z" fill="#d33" />
        <path d="M64 1h12v4l-5 5v22h-2V10l-5-5z" fill="#5f5f5f" />
      </svg>
      <button aria-label="Timeline settings" className="ml-auto text-[#777]">
        <Gear size={15} />
      </button>
    </footer>
  );
}

export default function App() {
  return (
    <div className="min-h-screen flex flex-col bg-[#505050] font-['Liberation_Sans',Arial,sans-serif]">
      <TitleBar />
      <TabBar />
      <Ribbon />
      <main className="relative flex-1 flex flex-col overflow-hidden">
        <Scene />
        <div className="relative flex-1 flex justify-between px-1 pt-1">
          <Browser />
          <div className="flex flex-col items-end">
            <ViewCube />
            <ExtrudePanel />
          </div>
        </div>
        <div className="relative grid grid-cols-[1fr_auto_1fr] items-center px-1 pb-1">
          <div className="w-[300px] h-[25px] bg-[#f1f1f1] border-b border-[#cfcfcf] flex items-center justify-between pl-[25px] pr-3 text-[10px] leading-4 text-[#555]">
            COMMENTS
            <button aria-label="Add comment">
              <svg width="9" height="9" viewBox="0 0 10 10"><circle cx="5" cy="5" r="5" fill="#222" /><path d="M2.500 5h5M5 2.500v5" stroke="#fff" strokeWidth="1.3" /></svg>
            </button>
          </div>
          <NavBar />
          <p className="justify-self-end pr-3 text-[11px] leading-4 font-bold text-[#e4e4e4]">2 Profiles | Min Distance : 14.71 mm</p>
        </div>
      </main>
      <Timeline />
    </div>
  );
}
